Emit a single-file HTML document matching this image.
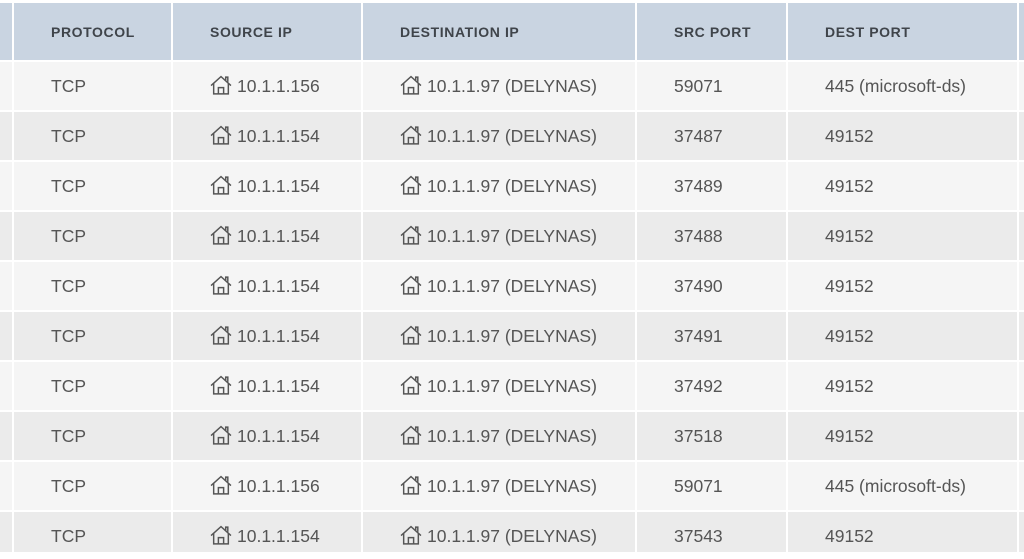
<!DOCTYPE html>
<html><head><style>
html,body{margin:0;padding:0;background:#fff;}
.wrap{position:relative;width:1024px;height:552px;overflow:hidden;}
table{position:absolute;left:-2px;top:1px;width:1043px;border-collapse:separate;border-spacing:2px;table-layout:fixed;font-family:"Liberation Sans",sans-serif;}
th{background:#c9d4e1;height:57px;padding:0 0 0 37px;text-align:left;font-size:14px;font-weight:bold;color:#3f444a;letter-spacing:0.6px;box-sizing:border-box;}
td{height:48px;padding:0 0 0 37px;font-size:17.5px;color:#555;box-sizing:border-box;white-space:nowrap;}
tr.a td{background:#f5f5f5;}
tr.b td{background:#ebebeb;}
th.e,td.e{padding:0;}
svg{vertical-align:-3px;margin-right:5px;}
</style></head><body><div class="wrap">
<table>
<colgroup><col style="width:12px"><col style="width:157px"><col style="width:188px"><col style="width:272px"><col style="width:149px"><col style="width:229px"><col style="width:20px"></colgroup>
<tr><th class="e"></th><th>PROTOCOL</th><th>SOURCE IP</th><th>DESTINATION IP</th><th>SRC PORT</th><th>DEST PORT</th><th class="e"></th></tr>
<tr class="a"><td class="e"></td><td>TCP</td><td><svg width="22" height="20" viewBox="0 0 21 19" fill="none" stroke="#555" stroke-width="1.4"><path d="M1 10 L10.5 1.5 L20 10"/><path d="M15 5 V2 h2 v4.5"/><path d="M3.5 8 V18 H17.5 V8"/><path d="M8 18 V12 h5 V18"/></svg>10.1.1.156</td><td><svg width="22" height="20" viewBox="0 0 21 19" fill="none" stroke="#555" stroke-width="1.4"><path d="M1 10 L10.5 1.5 L20 10"/><path d="M15 5 V2 h2 v4.5"/><path d="M3.5 8 V18 H17.5 V8"/><path d="M8 18 V12 h5 V18"/></svg>10.1.1.97 (DELYNAS)</td><td>59071</td><td>445 (microsoft-ds)</td><td class="e"></td></tr>
<tr class="b"><td class="e"></td><td>TCP</td><td><svg width="22" height="20" viewBox="0 0 21 19" fill="none" stroke="#555" stroke-width="1.4"><path d="M1 10 L10.5 1.5 L20 10"/><path d="M15 5 V2 h2 v4.5"/><path d="M3.5 8 V18 H17.5 V8"/><path d="M8 18 V12 h5 V18"/></svg>10.1.1.154</td><td><svg width="22" height="20" viewBox="0 0 21 19" fill="none" stroke="#555" stroke-width="1.4"><path d="M1 10 L10.5 1.5 L20 10"/><path d="M15 5 V2 h2 v4.5"/><path d="M3.5 8 V18 H17.5 V8"/><path d="M8 18 V12 h5 V18"/></svg>10.1.1.97 (DELYNAS)</td><td>37487</td><td>49152</td><td class="e"></td></tr>
<tr class="a"><td class="e"></td><td>TCP</td><td><svg width="22" height="20" viewBox="0 0 21 19" fill="none" stroke="#555" stroke-width="1.4"><path d="M1 10 L10.5 1.5 L20 10"/><path d="M15 5 V2 h2 v4.5"/><path d="M3.5 8 V18 H17.5 V8"/><path d="M8 18 V12 h5 V18"/></svg>10.1.1.154</td><td><svg width="22" height="20" viewBox="0 0 21 19" fill="none" stroke="#555" stroke-width="1.4"><path d="M1 10 L10.5 1.5 L20 10"/><path d="M15 5 V2 h2 v4.5"/><path d="M3.5 8 V18 H17.5 V8"/><path d="M8 18 V12 h5 V18"/></svg>10.1.1.97 (DELYNAS)</td><td>37489</td><td>49152</td><td class="e"></td></tr>
<tr class="b"><td class="e"></td><td>TCP</td><td><svg width="22" height="20" viewBox="0 0 21 19" fill="none" stroke="#555" stroke-width="1.4"><path d="M1 10 L10.5 1.5 L20 10"/><path d="M15 5 V2 h2 v4.5"/><path d="M3.5 8 V18 H17.5 V8"/><path d="M8 18 V12 h5 V18"/></svg>10.1.1.154</td><td><svg width="22" height="20" viewBox="0 0 21 19" fill="none" stroke="#555" stroke-width="1.4"><path d="M1 10 L10.5 1.5 L20 10"/><path d="M15 5 V2 h2 v4.5"/><path d="M3.5 8 V18 H17.5 V8"/><path d="M8 18 V12 h5 V18"/></svg>10.1.1.97 (DELYNAS)</td><td>37488</td><td>49152</td><td class="e"></td></tr>
<tr class="a"><td class="e"></td><td>TCP</td><td><svg width="22" height="20" viewBox="0 0 21 19" fill="none" stroke="#555" stroke-width="1.4"><path d="M1 10 L10.5 1.5 L20 10"/><path d="M15 5 V2 h2 v4.5"/><path d="M3.5 8 V18 H17.5 V8"/><path d="M8 18 V12 h5 V18"/></svg>10.1.1.154</td><td><svg width="22" height="20" viewBox="0 0 21 19" fill="none" stroke="#555" stroke-width="1.4"><path d="M1 10 L10.5 1.5 L20 10"/><path d="M15 5 V2 h2 v4.5"/><path d="M3.5 8 V18 H17.5 V8"/><path d="M8 18 V12 h5 V18"/></svg>10.1.1.97 (DELYNAS)</td><td>37490</td><td>49152</td><td class="e"></td></tr>
<tr class="b"><td class="e"></td><td>TCP</td><td><svg width="22" height="20" viewBox="0 0 21 19" fill="none" stroke="#555" stroke-width="1.4"><path d="M1 10 L10.5 1.5 L20 10"/><path d="M15 5 V2 h2 v4.5"/><path d="M3.5 8 V18 H17.5 V8"/><path d="M8 18 V12 h5 V18"/></svg>10.1.1.154</td><td><svg width="22" height="20" viewBox="0 0 21 19" fill="none" stroke="#555" stroke-width="1.4"><path d="M1 10 L10.5 1.5 L20 10"/><path d="M15 5 V2 h2 v4.5"/><path d="M3.5 8 V18 H17.5 V8"/><path d="M8 18 V12 h5 V18"/></svg>10.1.1.97 (DELYNAS)</td><td>37491</td><td>49152</td><td class="e"></td></tr>
<tr class="a"><td class="e"></td><td>TCP</td><td><svg width="22" height="20" viewBox="0 0 21 19" fill="none" stroke="#555" stroke-width="1.4"><path d="M1 10 L10.5 1.5 L20 10"/><path d="M15 5 V2 h2 v4.5"/><path d="M3.5 8 V18 H17.5 V8"/><path d="M8 18 V12 h5 V18"/></svg>10.1.1.154</td><td><svg width="22" height="20" viewBox="0 0 21 19" fill="none" stroke="#555" stroke-width="1.4"><path d="M1 10 L10.5 1.5 L20 10"/><path d="M15 5 V2 h2 v4.5"/><path d="M3.5 8 V18 H17.5 V8"/><path d="M8 18 V12 h5 V18"/></svg>10.1.1.97 (DELYNAS)</td><td>37492</td><td>49152</td><td class="e"></td></tr>
<tr class="b"><td class="e"></td><td>TCP</td><td><svg width="22" height="20" viewBox="0 0 21 19" fill="none" stroke="#555" stroke-width="1.4"><path d="M1 10 L10.5 1.5 L20 10"/><path d="M15 5 V2 h2 v4.5"/><path d="M3.5 8 V18 H17.5 V8"/><path d="M8 18 V12 h5 V18"/></svg>10.1.1.154</td><td><svg width="22" height="20" viewBox="0 0 21 19" fill="none" stroke="#555" stroke-width="1.4"><path d="M1 10 L10.5 1.5 L20 10"/><path d="M15 5 V2 h2 v4.5"/><path d="M3.5 8 V18 H17.5 V8"/><path d="M8 18 V12 h5 V18"/></svg>10.1.1.97 (DELYNAS)</td><td>37518</td><td>49152</td><td class="e"></td></tr>
<tr class="a"><td class="e"></td><td>TCP</td><td><svg width="22" height="20" viewBox="0 0 21 19" fill="none" stroke="#555" stroke-width="1.4"><path d="M1 10 L10.5 1.5 L20 10"/><path d="M15 5 V2 h2 v4.5"/><path d="M3.5 8 V18 H17.5 V8"/><path d="M8 18 V12 h5 V18"/></svg>10.1.1.156</td><td><svg width="22" height="20" viewBox="0 0 21 19" fill="none" stroke="#555" stroke-width="1.4"><path d="M1 10 L10.5 1.5 L20 10"/><path d="M15 5 V2 h2 v4.5"/><path d="M3.5 8 V18 H17.5 V8"/><path d="M8 18 V12 h5 V18"/></svg>10.1.1.97 (DELYNAS)</td><td>59071</td><td>445 (microsoft-ds)</td><td class="e"></td></tr>
<tr class="b"><td class="e"></td><td>TCP</td><td><svg width="22" height="20" viewBox="0 0 21 19" fill="none" stroke="#555" stroke-width="1.4"><path d="M1 10 L10.5 1.5 L20 10"/><path d="M15 5 V2 h2 v4.5"/><path d="M3.5 8 V18 H17.5 V8"/><path d="M8 18 V12 h5 V18"/></svg>10.1.1.154</td><td><svg width="22" height="20" viewBox="0 0 21 19" fill="none" stroke="#555" stroke-width="1.4"><path d="M1 10 L10.5 1.5 L20 10"/><path d="M15 5 V2 h2 v4.5"/><path d="M3.5 8 V18 H17.5 V8"/><path d="M8 18 V12 h5 V18"/></svg>10.1.1.97 (DELYNAS)</td><td>37543</td><td>49152</td><td class="e"></td></tr>
</table>
</div></body></html>
